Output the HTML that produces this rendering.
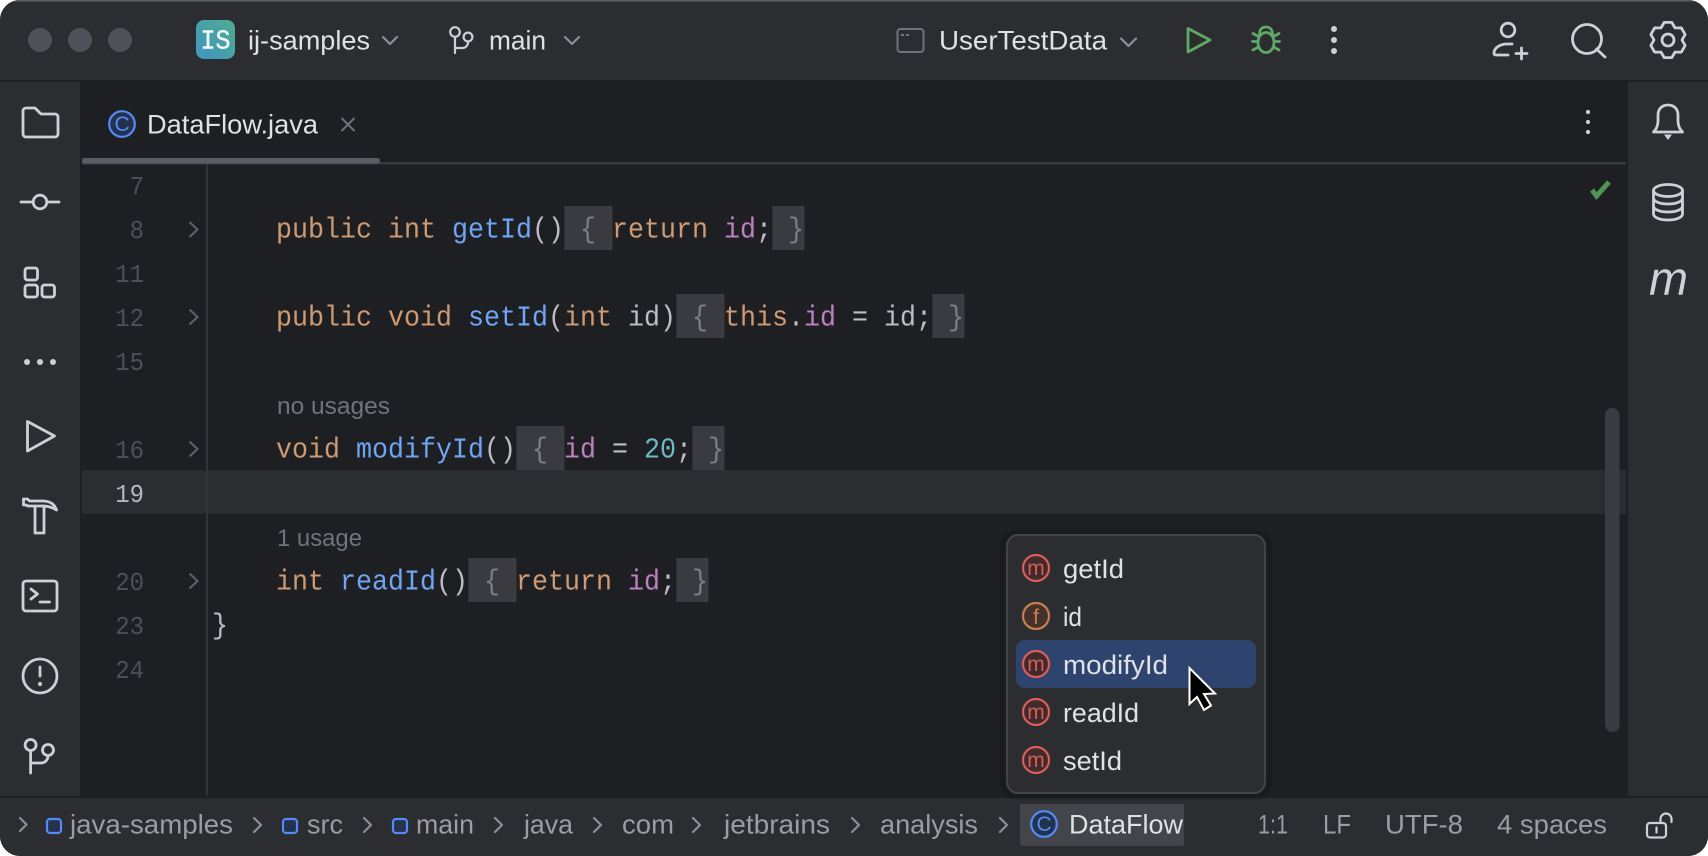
<!DOCTYPE html>
<html><head><meta charset="utf-8"><title>DataFlow.java</title>
<style>
html,body{margin:0;padding:0;width:1708px;height:856px;overflow:hidden;background:#fff}
svg{display:block}
.s{font-family:"Liberation Sans",sans-serif;font-size:27px}
.m{font-family:"Liberation Mono",monospace;font-size:26.67px;white-space:pre}
.l{font-family:"Liberation Mono",monospace;font-size:24px}
.k{fill:#cf9a72}.f{fill:#6fa6f2}.p{fill:#bcbec4}.v{fill:#c07fc0}.n{fill:#6fb9c4}.g{fill:#7a7e85}
.ln{fill:#4b5059;text-anchor:end}
.ic{fill:none;stroke:#ced0d6;stroke-width:2.8;stroke-linecap:round;stroke-linejoin:round}
.st{fill:#9a9da3}
.ch{fill:none;stroke:#8c8f96;stroke-width:2.2;stroke-linecap:round;stroke-linejoin:round}
.mod{fill:#25324d;stroke:#548af7;stroke-width:2.2}
</style></head><body>
<svg width="1708" height="856" viewBox="0 0 1708 856" xmlns="http://www.w3.org/2000/svg">
<defs>
<linearGradient id="isg" x1="0" y1="1" x2="1" y2="0"><stop offset="0" stop-color="#4095c4"/><stop offset="1" stop-color="#4fab8e"/></linearGradient>
<clipPath id="win"><rect x="0" y="0" width="1708" height="856" rx="20"/></clipPath>
</defs>
<rect width="1708" height="856" fill="#fff"/>
<g clip-path="url(#win)">
<rect width="1708" height="856" fill="#1e1f22"/>
<!-- title bar -->
<rect width="1708" height="80" fill="#2b2d30"/>
<rect width="1708" height="1.5" fill="#5c5e62"/>
<!-- side stripes -->
<rect x="0" y="82" width="80" height="714" fill="#2b2d30"/>
<rect x="1628" y="82" width="80" height="714" fill="#2b2d30"/>
<!-- status bar -->
<rect x="0" y="798" width="1708" height="58" fill="#2b2d30"/>
</g>
<!-- traffic lights -->
<circle cx="40" cy="40" r="12" fill="#4e5157"/><circle cx="80" cy="40" r="12" fill="#4e5157"/><circle cx="120" cy="40" r="12" fill="#4e5157"/>
<!-- project -->
<rect x="196" y="20" width="39" height="39" rx="8" fill="url(#isg)"/>
<text x="200.500" y="48.500" font-family="Liberation Mono" font-size="27" fill="#f2f7f7" stroke="#f2f7f7" stroke-width=".4" textLength="30" lengthAdjust="spacingAndGlyphs">IS</text>
<text class="s" x="248" y="49.500" fill="#dfe1e5" textLength="122" lengthAdjust="spacingAndGlyphs">ij-samples</text>
<path class="ch" d="M383 37l7 7 7-7"/>
<!-- branch -->
<g class="ic" style="stroke-width:2.2"><circle cx="455" cy="32" r="4.800"/><circle cx="468" cy="37" r="4.400"/><path d="M455 37v16M455 48h7.500a5.500 5.500 0 0 0 5.500-5.500v-1"/></g>
<text class="s" x="489" y="49.500" fill="#dfe1e5" textLength="57" lengthAdjust="spacingAndGlyphs">main</text>
<path class="ch" d="M565 37l7 7 7-7"/>
<!-- run config -->
<rect x="897.500" y="29" width="26" height="23" rx="3" fill="none" stroke="#6f737a" stroke-width="2"/>
<path d="M901 35h3M906 35h3" stroke="#6f737a" stroke-width="2"/>
<text class="s" x="939" y="49.500" fill="#dfe1e5" textLength="168" lengthAdjust="spacingAndGlyphs">UserTestData</text>
<path class="ch" d="M1121 38.500l7.500 7.500 7.500-7.500"/>
<path d="M1188 28.500L1210 40 1188 52Z" fill="none" stroke="#5fa865" stroke-width="2.800" stroke-linejoin="round"/>
<g fill="none" stroke="#5fa865" stroke-width="2.800" stroke-linecap="round"><ellipse cx="1266" cy="42.500" rx="8" ry="10"/><path d="M1259.500 34.500c0-5 2.500-7.500 6.500-7.500s6.500 2.500 6.500 7.500M1253 33.500l5.500 3M1252.500 41.500h5.500M1253 50l5.500-3M1279 33.500l-5.500 3M1279.500 41.500h-5.500M1279 50l-5.500-3"/></g>
<g fill="#ced0d6"><circle cx="1334" cy="29" r="3"/><circle cx="1334" cy="40" r="3"/><circle cx="1334" cy="51" r="3"/></g>
<g class="ic"><circle cx="1508" cy="30" r="6.800"/><path d="M1512 44h-5c-7 0-13 4-13 9q0 2 2 2h12M1516 53.500h11M1521.500 48v11"/>
<circle cx="1587" cy="39" r="14.500"/><path d="M1596.500 49L1605 57"/>
<g transform="translate(1668,40)"><polygon points="-3.740,-17.600 3.740,-17.600 7,-12.120 13.380,-12.040 17.120,-5.560 14,0 17.120,5.560 13.380,12.040 7,12.120 3.740,17.600 -3.740,17.600 -7,12.120 -13.380,12.040 -17.120,5.560 -14,0 -17.120,-5.560 -13.380,-12.040 -7,-12.120"/><circle r="6"/></g></g>

<!-- left stripe icons -->
<g class="ic">
<path d="M23 111a3 3 0 0 1 3-3h9l6 6h14a3 3 0 0 1 3 3v17a3 3 0 0 1-3 3H26a3 3 0 0 1-3-3Z"/>
<circle cx="40" cy="202" r="6.800"/><path d="M21 202h12M47 202h12"/>
<rect x="25" y="268" width="12.500" height="12" rx="2.500"/><rect x="25" y="285" width="12.500" height="12" rx="2.500"/><rect x="42" y="285" width="12.500" height="12" rx="2.500"/>
<path d="M27.500 421.500L54.500 436 27.500 451Z"/>
<path d="M23.500 499h4l2 2h13c7 0 12 3 14 9c-5-3-9-4-13-4h-16l-1-1h-3ZM35 506v27h9v-27"/>
<rect x="23" y="581" width="34" height="30" rx="3"/><path d="M31 589l6.500 5-6.500 5M40 602h9.500"/>
<circle cx="40" cy="676" r="17"/><path d="M40 667v9"/>
<circle cx="30.600" cy="745" r="5.500"/><circle cx="48" cy="750" r="5.500"/><path d="M30.600 751v22M31 763h10a7 7 0 0 0 7-7"/>
</g>
<circle cx="40" cy="684" r="2" fill="#ced0d6"/>
<g fill="#ced0d6"><circle cx="27" cy="362" r="3"/><circle cx="40" cy="362" r="3"/><circle cx="53" cy="362" r="3"/></g>

<!-- right stripe icons -->
<g class="ic"><path d="M1653.500 132c3-3 4.500-6 4.500-11v-6c0-6 4-10 10-10s10 4 10 10v6c0 5 1.500 8 4.500 11Z"/>
<ellipse cx="1668" cy="190.500" rx="14.500" ry="6"/><path d="M1653.500 190.500v23.500c0 3.500 6.500 6 14.500 6s14.500-2.500 14.500-6v-23.500M1653.500 198c0 3.500 6.500 6 14.500 6s14.500-2.500 14.500-6M1653.500 206c0 3.500 6.500 6 14.500 6s14.500-2.500 14.500-6"/></g>
<path d="M1664 134.500h8l-4 5.500Z" fill="#ced0d6"/>
<text x="1649" y="295" font-family="Liberation Sans" font-style="italic" font-size="47" fill="#ced0d6" textLength="39" lengthAdjust="spacingAndGlyphs">m</text>

<!-- tab -->
<circle cx="122" cy="124" r="12.800" fill="#25324d" stroke="#548af7" stroke-width="2.200"/>
<text x="114.500" y="131" font-family="Liberation Sans" font-size="21" fill="#548af7">C</text>
<text class="s" x="147" y="133.500" fill="#dfe1e5" textLength="171" lengthAdjust="spacingAndGlyphs">DataFlow.java</text>
<path d="M341.500 118l13 13M354.500 118l-13 13" stroke="#6f737a" stroke-width="2" fill="none"/>
<g fill="#ced0d6"><circle cx="1588" cy="112" r="2.100"/><circle cx="1588" cy="122" r="2.100"/><circle cx="1588" cy="132" r="2.100"/></g>
<rect x="82" y="162" width="1544" height="2.500" fill="#393b40"/>
<rect x="82" y="158" width="298" height="5.500" rx="2.500" fill="#5a5d63"/>

<!-- caret row -->
<rect x="82" y="470" width="1544" height="44" fill="#2b2d30"/>
<!-- gutter line -->
<rect x="206" y="164" width="2" height="632" fill="#313438"/>

<!-- scrollbar -->
<rect x="1605" y="408" width="14.500" height="324" rx="7" fill="#393b40"/>
<path d="M1592 190l4.500 6 12.500-14" fill="none" stroke="#4f9454" stroke-width="5"/>

<!-- line numbers -->
<g class="l">
<text class="ln" transform="translate(144,194) scale(1,1.08)">7</text>
<text class="ln" transform="translate(144,238) scale(1,1.08)">8</text>
<text class="ln" transform="translate(144,282) scale(1,1.08)">11</text>
<text class="ln" transform="translate(144,326) scale(1,1.08)">12</text>
<text class="ln" transform="translate(144,370) scale(1,1.08)">15</text>
<text class="ln" transform="translate(144,458) scale(1,1.08)">16</text>
<text class="ln" transform="translate(144,502) scale(1,1.08)" style="fill:#b4b8bf">19</text>
<text class="ln" transform="translate(144,590) scale(1,1.08)">20</text>
<text class="ln" transform="translate(144,634) scale(1,1.08)">23</text>
<text class="ln" transform="translate(144,678) scale(1,1.08)">24</text>
</g>
<!-- fold chevrons -->
<g fill="none" stroke="#5f6369" stroke-width="2"><path d="M189.500 222l8 7.500-8 7.500M189.500 309.500l8 7.500-8 7.500M189.500 441.500l8 7.500-8 7.500M189.500 573.500l8 7.500-8 7.500"/></g>

<!-- fold boxes -->
<g fill="#393b40">
<rect x="564.500" y="206" width="48" height="44"/><rect x="772.500" y="206" width="32" height="44"/>
<rect x="676.500" y="294" width="48" height="44"/><rect x="932.500" y="294" width="32" height="44"/>
<rect x="516.500" y="426" width="48" height="44"/><rect x="692.500" y="426" width="32" height="44"/>
<rect x="468.500" y="558" width="48" height="44"/><rect x="676.500" y="558" width="32" height="44"/>
</g>

<!-- code -->
<g class="m">
<text transform="translate(276,237.500) scale(1,1.07)"><tspan class="k">public int </tspan><tspan class="f">getId</tspan><tspan class="p">()</tspan><tspan class="g"> { </tspan><tspan class="k">return </tspan><tspan class="v">id</tspan><tspan class="p">;</tspan><tspan class="g"> }</tspan></text>
<text transform="translate(276,325.500) scale(1,1.07)"><tspan class="k">public void </tspan><tspan class="f">setId</tspan><tspan class="p">(</tspan><tspan class="k">int </tspan><tspan class="p">id)</tspan><tspan class="g"> { </tspan><tspan class="k">this</tspan><tspan class="p">.</tspan><tspan class="v">id</tspan><tspan class="p"> = id;</tspan><tspan class="g"> }</tspan></text>
<text transform="translate(276,457.500) scale(1,1.07)"><tspan class="k">void </tspan><tspan class="f">modifyId</tspan><tspan class="p">()</tspan><tspan class="g"> { </tspan><tspan class="v">id</tspan><tspan class="p"> = </tspan><tspan class="n">20</tspan><tspan class="p">;</tspan><tspan class="g"> }</tspan></text>
<text transform="translate(276,589.500) scale(1,1.07)"><tspan class="k">int </tspan><tspan class="f">readId</tspan><tspan class="p">()</tspan><tspan class="g"> { </tspan><tspan class="k">return </tspan><tspan class="v">id</tspan><tspan class="p">;</tspan><tspan class="g"> }</tspan></text>
<text transform="translate(212,633.500) scale(1,1.07)" class="p">}</text>
</g>
<text x="277" y="414" font-family="Liberation Sans" font-size="24.500" fill="#6f737a" textLength="113" lengthAdjust="spacingAndGlyphs">no usages</text>
<text x="277" y="546" font-family="Liberation Sans" font-size="24.500" fill="#6f737a" textLength="85" lengthAdjust="spacingAndGlyphs">1 usage</text>

<!-- status bar -->
<g class="ch"><path d="M20 818l6.500 6.500-6.500 6.500M254 818l7 7-7 7M364 818l7 7-7 7M495 818l7 7-7 7M594 818l7 7-7 7M693 818l7 7-7 7M852 818l7 7-7 7M1000 818l7 7-7 7"/></g>
<rect class="mod" x="47" y="819" width="14" height="14" rx="3"/>
<rect class="mod" x="283" y="819" width="14" height="14" rx="3"/>
<rect class="mod" x="393" y="819" width="14" height="14" rx="3"/>
<g class="s st">
<text x="70" y="833.500" textLength="163" lengthAdjust="spacingAndGlyphs">java-samples</text>
<text x="307" y="833.500" textLength="36" lengthAdjust="spacingAndGlyphs">src</text>
<text x="416" y="833.500" textLength="58" lengthAdjust="spacingAndGlyphs">main</text>
<text x="524" y="833.500" textLength="49" lengthAdjust="spacingAndGlyphs">java</text>
<text x="622" y="833.500" textLength="52" lengthAdjust="spacingAndGlyphs">com</text>
<text x="724" y="833.500" textLength="106" lengthAdjust="spacingAndGlyphs">jetbrains</text>
<text x="880" y="833.500" textLength="98" lengthAdjust="spacingAndGlyphs">analysis</text>
<text x="1258" y="833.500" textLength="30" lengthAdjust="spacingAndGlyphs">1:1</text>
<text x="1323" y="833.500" textLength="28" lengthAdjust="spacingAndGlyphs">LF</text>
<text x="1385" y="833.500" textLength="78" lengthAdjust="spacingAndGlyphs">UTF-8</text>
<text x="1497" y="833.500" textLength="110" lengthAdjust="spacingAndGlyphs">4 spaces</text>
</g>
<rect x="1020" y="804" width="164" height="42" rx="2" fill="#43454a"/>
<circle cx="1044" cy="824" r="12.800" fill="#25324d" stroke="#548af7" stroke-width="2.200"/>
<text x="1036.500" y="831" font-family="Liberation Sans" font-size="21" fill="#548af7">C</text>
<text class="s" x="1069" y="833.500" fill="#dfe1e5" textLength="114" lengthAdjust="spacingAndGlyphs">DataFlow</text>
<g class="ic" style="stroke:#ced0d6;stroke-width:2.2"><rect x="1647" y="823" width="19" height="14.500" rx="3"/><path d="M1660.500 822v-3a5.500 5.500 0 0 1 11 0v3M1656.500 827.500v5"/></g>

<!-- popup -->
<rect x="1000" y="530" width="272" height="270" rx="16" fill="#000" opacity=".12"/>
<rect x="1007" y="535" width="258" height="258" rx="11" fill="#2b2d30" stroke="#43454a" stroke-width="2"/>
<rect x="1016" y="640" width="240" height="48" rx="9" fill="#2e436e"/>
<g stroke="#db5c5c" stroke-width="2.200" fill="#3f2a2c">
<circle cx="1036" cy="568" r="13"/><circle cx="1036" cy="664" r="13"/><circle cx="1036" cy="712" r="13"/><circle cx="1036" cy="760" r="13"/>
</g>
<circle cx="1036" cy="616" r="13" stroke="#c77d55" stroke-width="2.200" fill="#45322b"/>
<g font-family="Liberation Sans" font-size="21" fill="#db5c5c" text-anchor="middle">
<text x="1036" y="575">m</text><text x="1036" y="671">m</text><text x="1036" y="719">m</text><text x="1036" y="767">m</text>
<text x="1036" y="624" style="fill:#c77d55">f</text>
</g>
<g class="s" fill="#dfe1e5">
<text x="1063" y="578" textLength="61" lengthAdjust="spacingAndGlyphs">getId</text>
<text x="1063" y="626" textLength="19" lengthAdjust="spacingAndGlyphs">id</text>
<text x="1063" y="674" textLength="105" lengthAdjust="spacingAndGlyphs">modifyId</text>
<text x="1063" y="722" textLength="76" lengthAdjust="spacingAndGlyphs">readId</text>
<text x="1063" y="770" textLength="59" lengthAdjust="spacingAndGlyphs">setId</text>
</g>
<!-- cursor -->
<path d="M1189.500 668V704L1197 697 1204 710 1211 705.500 1204 694 1215 693.500Z" fill="#000" stroke="#fff" stroke-width="2"/>
</svg>
</body></html>
